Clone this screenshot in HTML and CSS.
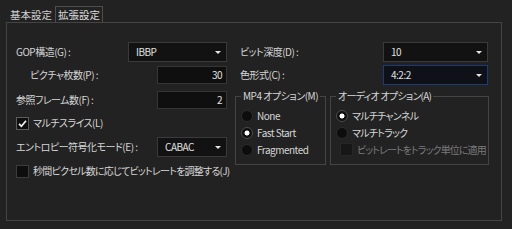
FILE: index.html
```html
<!DOCTYPE html>
<html lang="ja">
<head>
<meta charset="utf-8">
<link rel="stylesheet" href="styles.css">
</head>
<body>
<div class="tabs">
  <div class="tab">基本設定</div>
  <div class="tab active">拡張設定</div>
</div>
<div class="panel">
  <div class="top">
    <div class="row lrow">
      <span class="lbl">GOP構造(G) :</span>
      <div class="combo w99"><span>IBBP</span><i class="arrow"></i></div>
    </div>
    <div class="row rrow">
      <span class="lbl">ビット深度(D) :</span>
      <div class="combo w105"><span>10</span><i class="arrow"></i></div>
    </div>
    <div class="row lrow">
      <span class="lbl indent">ピクチャ枚数(P) :</span>
      <div class="input">30</div>
    </div>
    <div class="row rrow">
      <span class="lbl">色形式(C) :</span>
      <div class="combo w105 focus"><span>4:2:2</span><i class="arrow"></i></div>
    </div>
  </div>
  <div class="bottom">
    <div class="lcol">
      <div class="row lrow h18">
        <span class="lbl">参照フレーム数(F) :</span>
        <div class="input">2</div>
      </div>
      <div class="chkrow">
        <span class="chk on"><svg viewBox="0 0 13 13" width="13" height="13"><path d="M3 6.8 L5.4 9.2 L10 3.8" fill="none" stroke="#f2f2f2" stroke-width="1.7"/></svg></span>
        <span class="lbl">マルチスライス(L)</span>
      </div>
      <div class="row lrow">
        <span class="lbl">エントロピー符号化モード(E) :</span>
        <div class="combo w70"><span>CABAC</span><i class="arrow"></i></div>
      </div>
      <div class="chkrow">
        <span class="chk"></span>
        <span class="lbl tight">秒間ピクセル数に応じてビットレートを調整する(J)</span>
      </div>
    </div>
    <fieldset class="grp mp4">
      <legend>MP4 オプション(M)</legend>
      <div class="opt"><span class="radio"></span><span>None</span></div>
      <div class="opt"><span class="radio on"></span><span>Fast Start</span></div>
      <div class="opt"><span class="radio"></span><span>Fragmented</span></div>
    </fieldset>
    <fieldset class="grp audio">
      <legend class="tight">オーディオ オプション(A)</legend>
      <div class="opt"><span class="radio on"></span><span class="tight">マルチチャンネル</span></div>
      <div class="opt"><span class="radio"></span><span class="tight">マルチトラック</span></div>
      <div class="opt sub"><span class="chk dis"></span><span class="dtext">ビットレートをトラック単位に適用</span></div>
    </fieldset>
  </div>
</div>
</body>
</html>
```

FILE: styles.css
```css
* { box-sizing: border-box; }
html, body {
  margin: 0;
  padding: 0;
  background: #222222;
}
body {
  width: 512px;
  height: 229px;
  overflow: hidden;
  font-family: "Noto Sans CJK JP", "Noto Sans", sans-serif;
  font-size: 10px;
  letter-spacing: -0.5px;
  font-feature-settings: "palt";
  color: #d6d6d6;
  line-height: 14px;
}
.tabs {
  display: flex;
  align-items: flex-end;
  height: 22px;
  padding-left: 7px;
}
.tab {
  height: 16px;
  padding: 0 2px;
  border: 1px solid transparent;
  border-bottom: 0;
  line-height: 15px;
  font-size: 10.5px;
  letter-spacing: 0;
  color: #cfcfcf;
}
.active {
  border-color: #4e4e4e;
  color: #dcdcdc;
}
.panel {
  margin-left: 6px;
  width: 496px;
  height: 199px;
  border: 1px solid #444444;
  padding: 19px 0 0 9px;
}
.top {
  display: grid;
  grid-template-columns: 211px 253px;
  column-gap: 8px;
  row-gap: 3px;
}
.row {
  display: flex;
  align-items: center;
  justify-content: space-between;
  height: 20px;
}
.rrow { padding-left: 5px; }
.h18 { height: 18px; }
.indent { padding-left: 14px; }
.lbl { white-space: nowrap; }
.tight { letter-spacing: -0.75px; }
.combo {
  height: 20px;
  background: #121212;
  border: 1px solid #3a3a3a;
  display: flex;
  align-items: center;
  justify-content: space-between;
  padding: 0 5px 0 7px;
  color: #e0e0e0;
}
.combo.focus {
  border-color: #1d3a78;
  background: #0f1118;
}
.w99 { width: 99px; }
.w105 { width: 105px; }
.w70 { width: 70px; }
.arrow {
  width: 0;
  height: 0;
  border-left: 3px solid transparent;
  border-right: 3px solid transparent;
  border-top: 3px solid #e6e6e6;
  margin-top: 1px;
}
.input {
  width: 70px;
  height: 18px;
  background: #0f0f0f;
  border: 1px solid #353535;
  text-align: right;
  padding-right: 4px;
  line-height: 16px;
  color: #e0e0e0;
}
.bottom {
  display: flex;
  align-items: flex-start;
}
.lcol {
  width: 211px;
  flex: none;
  display: flex;
  flex-direction: column;
  gap: 5px;
  padding-top: 6px;
}
.chkrow {
  display: flex;
  align-items: center;
  height: 18px;
  gap: 4px;
  white-space: nowrap;
}
.chk {
  width: 13px;
  height: 13px;
  flex: none;
  background: #0e0e0e;
  border: 1px solid #3c3c3c;
  display: block;
}
.chk svg { display: block; margin: -1px; }
.chk.on { border-color: #5c5c5c; }
.chk.dis {
  background: #171717;
  border-color: #262626;
}
.grp {
  margin: 4px 0 0 0;
  border: 1px solid #444444;
  padding: 4px 0 6px 5px;
  min-width: 0;
}
.grp legend {
  padding: 0 2px;
  line-height: 14px;
  white-space: nowrap;
  color: #d6d6d6;
}
.mp4 { width: 91px; margin-left: 8px; }
.audio { width: 159px; margin-left: 4px; }
.opt {
  display: flex;
  align-items: center;
  height: 17px;
  gap: 4px;
  white-space: nowrap;
}
.radio {
  width: 12px;
  height: 12px;
  flex: none;
  border-radius: 50%;
  background: #0d0d0d;
  border: 1px solid #2c2c2c;
}
.radio.on {
  background: radial-gradient(circle, #ffffff 0 2.2px, #101010 2.8px);
  border-color: #4a4a4a;
}
.sub { padding-left: 4px; }
.dtext {
  color: #7a7a7a;
  letter-spacing: -0.9px;
}
```
